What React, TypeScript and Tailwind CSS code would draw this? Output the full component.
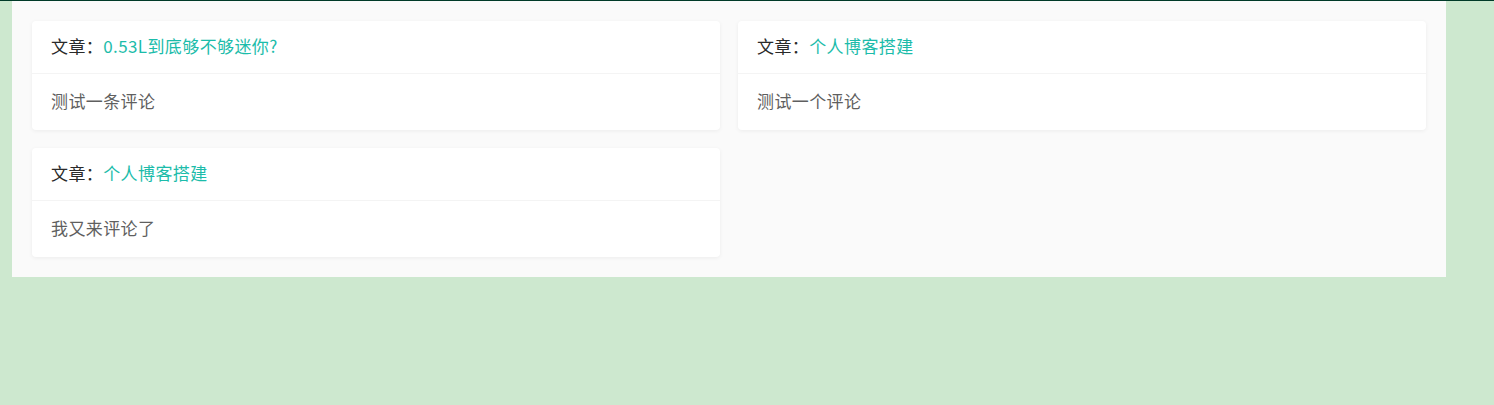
import React from "react";

type Comment = { id: number; title: string; content: string };

const comments: Comment[] = [
  { id: 1, title: "0.53L到底够不够迷你?", content: "测试一条评论" },
  { id: 2, title: "个人博客搭建", content: "测试一个评论" },
  { id: 3, title: "个人博客搭建", content: "我又来评论了" },
];

function CommentCard({ comment }: { comment: Comment }) {
  return (
    <div className="overflow-hidden rounded bg-white shadow-[0_1px_4px_rgba(0,0,0,0.06)]">
      <div className="flex h-[53px] items-center border-b border-[#f4f4f4] px-[19px] pb-[2px] text-[17px] leading-6 tracking-[0.4px]">
        <span className="text-[#2a2a2a]">文章：</span>
        <a href="#" className="text-[#1cbcaa]">
          {comment.title}
        </a>
      </div>
      <div className="flex h-[56px] items-center px-[19px] pb-[2px] text-[17px] leading-6 tracking-[0.4px] text-[#5f5f5f]">
        {comment.content}
      </div>
    </div>
  );
}

export default function App() {
  return (
    <div
      className="min-h-[405px] border-t border-[#003a28] bg-[#cde8cf]"
      style={{ fontFamily: '"Microsoft YaHei", "Noto Sans CJK SC", "Liberation Sans", sans-serif' }}
    >
      <div className="ml-3 w-[1434px] bg-[#fafafa] p-5">
        <div className="grid grid-cols-2 gap-[18px]">
          {comments.map((c) => (
            <CommentCard key={c.id} comment={c} />
          ))}
        </div>
      </div>
    </div>
  );
}
